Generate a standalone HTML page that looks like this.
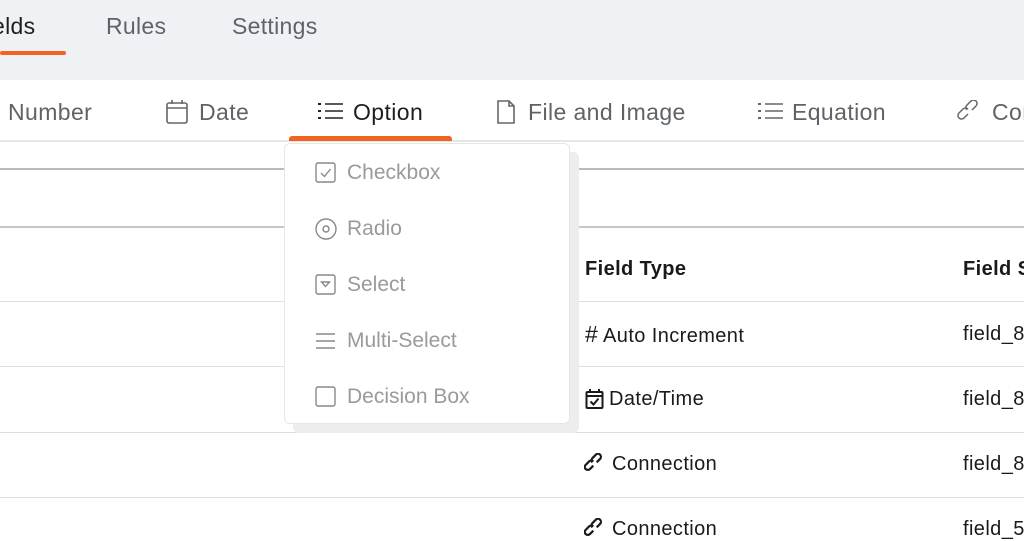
<!DOCTYPE html>
<html><head><meta charset="utf-8"><style>
*{margin:0;padding:0;box-sizing:border-box}
body{width:1024px;height:539px;overflow:hidden;background:#fff;font-family:"Liberation Sans",Arial,sans-serif;position:relative}
.a{position:absolute;white-space:nowrap}
.top{position:absolute;left:0;top:0;width:1024px;height:80px;background:#eef2f5}
.t1{font-size:23px;color:#5f6368;top:13px;letter-spacing:0.3px}
.t2{font-size:23px;color:#5f6368;top:99px;letter-spacing:0.4px}
.hl{position:absolute;left:0;width:1024px;height:1px;background:#dcdfe3}
.dd{position:absolute;left:284px;top:143px;width:286px;height:281px;background:#fff;border:1px solid #e6e6e6;border-radius:6px;box-shadow:9px 9px 0 #ededed}
.it{position:absolute;left:30px;font-size:21px;color:#9a9a9a;display:flex;align-items:center;gap:10px}
.it svg{width:22px;height:22px}
.tb{font-size:20px;color:#1a1a1a;letter-spacing:0.4px;line-height:23px}
</style></head><body>
<div class="top"></div>
<div class="a t1" style="left:-8px;color:#1e1e1e">elds</div>
<div class="a" style="left:0;top:51px;width:66px;height:4px;background:#f26322;border-radius:2px"></div>
<div class="a t1" style="left:106px">Rules</div>
<div class="a t1" style="left:232px">Settings</div>
<div class="hl" style="top:140px;background:#e3e6ea;height:2px"></div>
<div class="a t2" style="left:8px">Number</div>
<svg class="a" style="left:165px;top:99px" width="24" height="26" viewBox="0 0 24 26" fill="none" stroke="#666" stroke-width="1.6"><rect x="2" y="4" width="20" height="20" rx="2"/><line x1="2" y1="9" x2="22" y2="9"/><line x1="7" y1="1" x2="7" y2="5"/><line x1="17" y1="1" x2="17" y2="5"/></svg>
<div class="a t2" style="left:199px">Date</div>
<svg class="a" style="left:318px;top:101px" width="26" height="20" viewBox="0 0 26 20" stroke="#222" stroke-width="2"><line x1="0" y1="3" x2="3" y2="3"/><line x1="0" y1="10" x2="3" y2="10"/><line x1="0" y1="17" x2="3" y2="17"/><line x1="7" y1="3" x2="25" y2="3" stroke-width="1.6"/><line x1="7" y1="10" x2="25" y2="10" stroke-width="1.6"/><line x1="7" y1="17" x2="25" y2="17" stroke-width="1.6"/></svg>
<div class="a t2" style="left:353px;color:#1e1e1e">Option</div>
<div class="a" style="left:289px;top:136px;width:163px;height:5px;background:#f26322;border-radius:3px 3px 0 0"></div>
<svg class="a" style="left:496px;top:99px" width="20" height="26" viewBox="0 0 20 26" fill="none" stroke="#666" stroke-width="1.6"><path d="M2 2h11l5 5v17H2z"/><path d="M13 2v5h5"/></svg>
<div class="a t2" style="left:528px">File and Image</div>
<svg class="a" style="left:758px;top:101px" width="26" height="20" viewBox="0 0 26 20" stroke="#666" stroke-width="2"><line x1="0" y1="3" x2="3" y2="3"/><line x1="0" y1="10" x2="3" y2="10"/><line x1="0" y1="17" x2="3" y2="17"/><line x1="7" y1="3" x2="25" y2="3" stroke-width="1.4"/><line x1="7" y1="10" x2="25" y2="10" stroke-width="1.4"/><line x1="7" y1="17" x2="25" y2="17" stroke-width="1.4"/></svg>
<div class="a t2" style="left:792px">Equation</div>
<svg class="a" style="left:957px;top:100px" width="26" height="24" viewBox="0 0 26 24" fill="none" stroke="#666" stroke-width="1.5"><path d="M11 14l-4 4a3.5 3.5 0 0 1-5-5l4-4a3.5 3.5 0 0 1 5 0"/><path d="M15 10l4-4a3.5 3.5 0 0 0-5-5l-4 4a3.5 3.5 0 0 0 0 5"/></svg>
<div class="a t2" style="left:992px">Con</div>
<div class="hl" style="top:168px;height:2px;background:#b8bcc0"></div>
<div class="hl" style="top:226px;height:2px;background:#c4c7cb"></div>
<div class="hl" style="top:301px"></div>
<div class="hl" style="top:366px"></div>
<div class="hl" style="top:432px"></div>
<div class="hl" style="top:497px"></div>
<div class="a tb" style="left:585px;top:258px;font-weight:bold">Field Type</div>
<div class="a tb" style="left:963px;top:258px;font-weight:bold">Field S</div>
<div class="a tb" style="left:585px;top:323px"><span style="font-size:23px;line-height:23px">#</span> Auto Increment</div>
<div class="a tb" style="left:963px;top:323px">field_8</div>
<svg class="a" style="left:585px;top:388px" width="19" height="22" viewBox="0 0 19 22" fill="none" stroke="#1a1a1a" stroke-width="2"><rect x="1.5" y="4" width="16" height="16" rx="1"/><line x1="1.5" y1="8" x2="17.5" y2="8"/><line x1="5" y1="1" x2="5" y2="5"/><line x1="14" y1="1" x2="14" y2="5"/><path d="M5.5 13.5l3 3 5-6"/></svg>
<div class="a tb" style="left:609px;top:388px">Date/Time</div>
<div class="a tb" style="left:963px;top:388px">field_8</div>
<svg class="a" style="left:584px;top:453px" width="22" height="22" viewBox="0 0 26 24" fill="none" stroke="#1a1a1a" stroke-width="2.6"><path d="M11 14l-4 4a3.5 3.5 0 0 1-5-5l4-4a3.5 3.5 0 0 1 5 0"/><path d="M15 10l4-4a3.5 3.5 0 0 0-5-5l-4 4a3.5 3.5 0 0 0 0 5"/></svg>
<div class="a tb" style="left:612px;top:453px">Connection</div>
<div class="a tb" style="left:963px;top:453px">field_8</div>
<svg class="a" style="left:584px;top:518px" width="22" height="22" viewBox="0 0 26 24" fill="none" stroke="#1a1a1a" stroke-width="2.6"><path d="M11 14l-4 4a3.5 3.5 0 0 1-5-5l4-4a3.5 3.5 0 0 1 5 0"/><path d="M15 10l4-4a3.5 3.5 0 0 0-5-5l-4 4a3.5 3.5 0 0 0 0 5"/></svg>
<div class="a tb" style="left:612px;top:518px">Connection</div>
<div class="a tb" style="left:963px;top:518px">field_5</div>
<div class="dd">
<div class="it" style="top:17px"><svg viewBox="0 0 22 22" fill="none" stroke="#888" stroke-width="1.4"><rect x="1" y="1" width="19" height="19" rx="2"/><path d="M6 11l3.5 3.5L15.5 7"/></svg>Checkbox</div>
<div class="it" style="top:73px"><svg viewBox="0 0 22 22" fill="none" stroke="#888" stroke-width="1.4"><circle cx="11" cy="11" r="10"/><circle cx="11" cy="11" r="3"/></svg>Radio</div>
<div class="it" style="top:129px"><svg viewBox="0 0 22 22" fill="none" stroke="#888" stroke-width="1.4"><rect x="1" y="1" width="19" height="19" rx="2"/><path d="M6.5 8h8l-4 4.5z"/></svg>Select</div>
<div class="it" style="top:185px"><svg viewBox="0 0 22 22" fill="none" stroke="#888" stroke-width="1.4"><line x1="1" y1="4" x2="20" y2="4"/><line x1="1" y1="11" x2="20" y2="11"/><line x1="1" y1="18" x2="20" y2="18"/></svg>Multi-Select</div>
<div class="it" style="top:241px"><svg viewBox="0 0 22 22" fill="none" stroke="#888" stroke-width="1.4"><rect x="1" y="1" width="19" height="19" rx="2"/></svg>Decision Box</div>
</div>
</body></html>
